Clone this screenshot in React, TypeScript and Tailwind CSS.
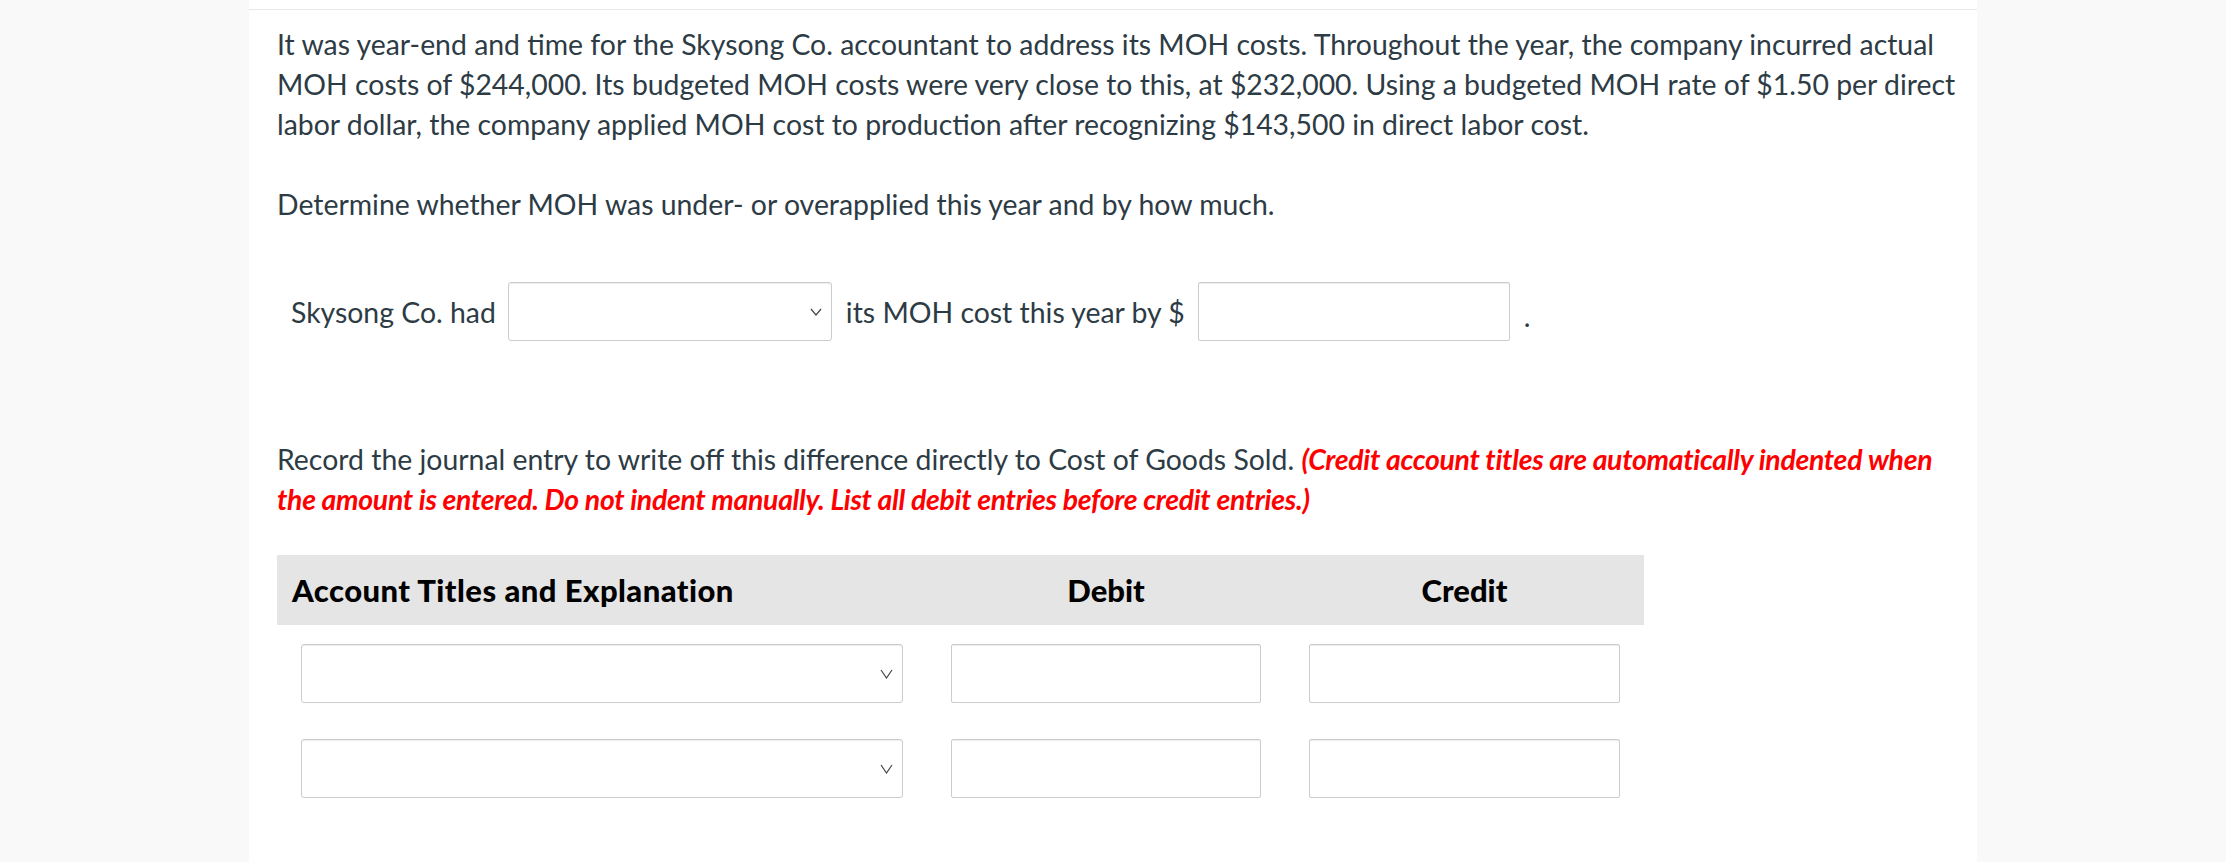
import React from 'react';

function Chevron({ size = 'sm' }: { size?: 'sm' | 'md' }) {
  const w = size === 'sm' ? 12 : 13;
  const h = size === 'sm' ? 8 : 10;
  return (
    <svg width={w} height={h} viewBox={`0 0 ${w} ${h}`} className="shrink-0" aria-hidden>
      <path d={`M1 1 L${w / 2} ${h - 1} L${w - 1} 1`} fill="none" stroke="#444" strokeWidth="1.2" />
    </svg>
  );
}

function SelectBox({ className, size }: { className: string; size?: 'sm' | 'md' }) {
  return (
    <div
      className={`flex items-center justify-end pr-[9px] bg-white border border-[#cccccc] rounded-[3px] shadow-[inset_0_1px_1px_rgba(0,0,0,0.075)] ${className}`}
    >
      <Chevron size={size} />
    </div>
  );
}

function TextBox({ className }: { className: string }) {
  return (
    <div
      className={`bg-white border border-[#cccccc] rounded-[2px] shadow-[inset_0_1px_1px_rgba(0,0,0,0.075)] ${className}`}
    />
  );
}

function EntryRow() {
  return (
    <div className="grid grid-cols-[650px_358px_359px] pt-[19px] pb-[17px]">
      <div className="px-[24px]">
        <SelectBox className="h-[59px] w-full" size="md" />
      </div>
      <div className="px-[24px]">
        <TextBox className="h-[59px] w-full" />
      </div>
      <div className="px-[24px]">
        <TextBox className="h-[59px] w-full" />
      </div>
    </div>
  );
}

export default function App() {
  return (
    <div className="min-h-screen bg-[#f9f9f9] flex justify-center font-['Lato','Liberation_Sans',sans-serif] text-[28.4px] leading-[40px] text-[#2d3b45]">
      <div className="w-[1728px] bg-white pt-[9px] pb-[40px]">
        <div className="border-t border-[#e8e8e8] pl-[28px] pt-[14px]">
          <p className="w-[1680px]">
            It was year-end and time for the Skysong Co. accountant to address its MOH costs. Throughout the year, the
            company incurred actual MOH costs of $244,000. Its budgeted MOH costs were very close to this, at $232,000.
            Using a budgeted MOH rate of $1.50 per direct labor dollar, the company applied MOH cost to production after
            recognizing $143,500 in direct labor cost.
          </p>

          <p className="mt-[40px]">Determine whether MOH was under- or overapplied this year and by how much.</p>

          <div className="mt-[58px] pl-[14px] flex items-center">
            <span>Skysong Co. had</span>
            <SelectBox className="ml-[12px] h-[59px] w-[324px]" />
            <span className="ml-[14px]">its MOH cost this year by $</span>
            <TextBox className="ml-[13px] h-[59px] w-[312px]" />
            <span className="ml-[14px] mt-[8px]">.</span>
          </div>

          <p className="mt-[98px] w-[1680px]">
            Record the journal entry to write off this difference directly to Cost of Goods Sold.{' '}
            <span className="text-[#ff0000] font-bold italic tracking-[-0.3px]">
              (Credit account titles are automatically indented when the amount is entered. Do not indent manually. List
              all debit entries before credit entries.)
            </span>
          </p>

          <div className="mt-[36px] w-[1367px]">
            <div className="grid grid-cols-[650px_358px_359px] h-[70px] items-center bg-[#e5e5e5] text-black font-black text-[31px]">
              <div className="pl-[15px] tracking-[0.45px]">Account Titles and Explanation</div>
              <div className="text-center">Debit</div>
              <div className="text-center">Credit</div>
            </div>
            <EntryRow />
            <EntryRow />
          </div>
        </div>
      </div>
    </div>
  );
}
